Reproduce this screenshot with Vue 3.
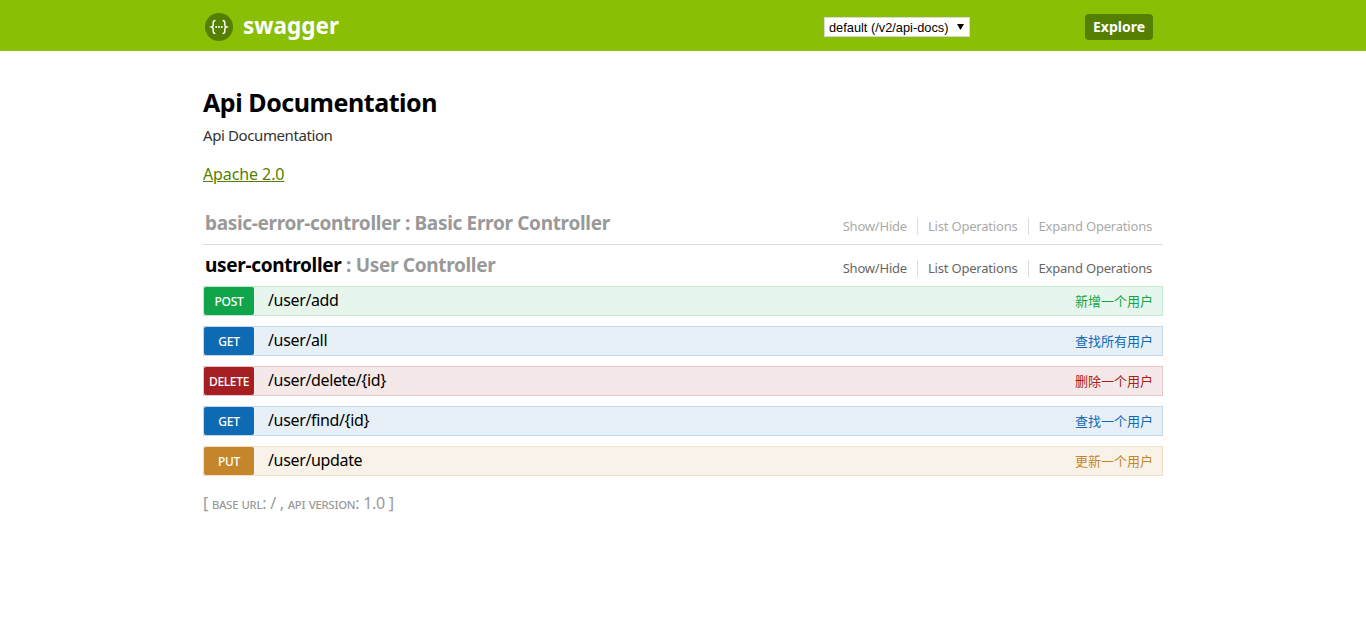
<script setup>
const ops = [
  { method: 'POST', cls: 'post', path: '/user/add', summary: '新增一个用户' },
  { method: 'GET', cls: 'get', path: '/user/all', summary: '查找所有用户' },
  { method: 'DELETE', cls: 'del', path: '/user/delete/{id}', summary: '删除一个用户' },
  { method: 'GET', cls: 'get', path: '/user/find/{id}', summary: '查找一个用户' },
  { method: 'PUT', cls: 'put', path: '/user/update', summary: '更新一个用户' },
]
</script>

<template>
  <div class="page">
    <header class="top">
      <div class="top-inner">
        <a class="logo">
          <span class="logo-mark">
            <svg width="28" height="28" viewBox="0 0 28 28">
              <circle cx="14" cy="14" r="14" fill="#547f00" />
              <path d="M10.4 7.4c-1.8 0-2.2.9-2.2 2.3v2.3c0 1.1-.5 1.7-1.6 2 1.1.3 1.6.9 1.6 2v2.3c0 1.4.4 2.3 2.2 2.3M17.6 7.4c1.8 0 2.2.9 2.2 2.3v2.3c0 1.1.5 1.7 1.6 2-1.1.3-1.6.9-1.6 2v2.3c0 1.4-.4 2.3-2.2 2.3" fill="none" stroke="#fff" stroke-width="1.5" />
              <circle cx="11.2" cy="14" r="1" fill="#fff" />
              <circle cx="14" cy="14" r="1" fill="#fff" />
              <circle cx="16.8" cy="14" r="1" fill="#fff" />
            </svg>
          </span>
          <span class="logo-text">swagger</span>
        </a>
        <div class="select-wrap">
          <select class="spec">
            <option>default (/v2/api-docs)</option>
          </select>
          <svg class="select-arrow" width="7" height="6" viewBox="0 0 7 6"><path d="M0 0h7L3.5 6z" fill="#000" /></svg>
        </div>
        <button class="explore">Explore</button>
      </div>
    </header>

    <main class="content">
      <h1 class="title">Api Documentation</h1>
      <p class="desc">Api Documentation</p>
      <a class="license">Apache 2.0</a>

      <section class="resource first">
        <div class="res-head muted">
          <h2 class="res-title"><span class="res-name">basic-error-controller</span><span class="res-desc"> : Basic Error Controller</span></h2>
          <ul class="actions">
            <li>Show/Hide</li>
            <li>List Operations</li>
            <li>Expand Operations</li>
          </ul>
        </div>
      </section>

      <section class="resource">
        <div class="res-head">
          <h2 class="res-title"><span class="res-name">user-controller</span><span class="res-desc"> : User Controller</span></h2>
          <ul class="actions">
            <li>Show/Hide</li>
            <li>List Operations</li>
            <li>Expand Operations</li>
          </ul>
        </div>
        <div class="ops">
          <div v-for="op in ops" :key="op.path" class="op" :class="op.cls">
            <span class="method">{{ op.method }}</span>
            <span class="path">{{ op.path }}</span>
            <span class="summary">{{ op.summary }}</span>
          </div>
        </div>
      </section>

      <p class="footer">[ <span class="sc">base url</span>: / , <span class="sc">api version</span>: 1.0 ]</p>
    </main>
  </div>
</template>

<style>
html, body { margin: 0; background: #fff; }
</style>

<style scoped>
.page {
  font-family: "Noto Sans", "Open Sans", "Noto Sans CJK SC", sans-serif;
  color: #000;
}
.top { background: #89bf04; height: 51px; }
.top-inner {
  width: 960px;
  margin: 0 auto;
  height: 51px;
  display: flex;
  align-items: center;
  position: relative;
}
.logo { display: flex; align-items: center; width: 621px; flex: none; }
.logo-mark { display: block; width: 28px; height: 28px; margin-left: 2px; margin-top: 3px; }
.logo-text { color: #fff; font-weight: 700; font-size: 22.5px; margin-left: 10px; line-height: 28px; }
.select-wrap { position: relative; width: 146px; height: 20px; margin-top: 3px; flex: none; }
.spec {
  appearance: none;
  display: block;
  width: 146px;
  height: 20px;
  box-sizing: border-box;
  border: 1px solid #d8d8d8;
  border-radius: 0;
  background: #fff;
  color: #000;
  padding: 0 0 0 4px;
  font: 12.8px "Liberation Sans", Arial, sans-serif;
}
.select-arrow { position: absolute; right: 6px; top: 7px; pointer-events: none; }
.explore {
  margin-left: 115px;
  margin-top: 2px;
  width: 68px;
  height: 26px;
  flex: none;
  border: 0;
  border-radius: 4px;
  background: #547f00;
  color: #fff;
  font: 700 14px "Noto Sans", "Open Sans", sans-serif;
  padding: 0;
}
.content { width: 960px; margin: 0 auto; }
.title {
  margin: 0;
  padding-top: 36px;
  font-size: 25px;
  letter-spacing: -0.45px;
  line-height: 31px;
  font-weight: 700;
}
.desc { margin: 6px 0 0; font-size: 15px; letter-spacing: -0.4px; line-height: 23px; color: #333; }
.license {
  display: inline-block;
  margin-top: 16px;
  font-size: 16px;
  letter-spacing: -0.1px;
  line-height: 22px;
  color: #547f00;
  text-decoration: underline;
}
.resource { margin: 0; }
.resource.first { margin-top: 16px; border-bottom: 1px solid #ddd; }
.res-head {
  display: flex;
  justify-content: space-between;
  align-items: flex-start;
  height: 41px;
  box-sizing: border-box;
}
.first .res-head { height: 43px; padding-top: 1px; }
.res-title {
  margin: 0;
  padding: 7px 0 0 2px;
  font-size: 19px;
  letter-spacing: -0.32px;
  line-height: 26px;
  font-weight: 700;
}
.first .res-title { padding-top: 8px; }
.res-name { color: #000; }
.res-desc { color: #999; }
.muted .res-name { color: #999; }
.actions {
  list-style: none;
  margin: 0;
  padding: 15px 0 0;
  display: flex;
  font-size: 13px;
  letter-spacing: -0.2px;
  line-height: 17px;
  color: #666;
}
.first .actions { padding-top: 16px; }
.actions li { padding: 0 10px; border-left: 1px solid #ddd; }
.actions li:first-child { border-left: 0; }
.actions li:last-child { padding-right: 11px; }
.muted .actions { color: #aaa; }
.ops { display: flex; flex-direction: column; gap: 10px; }
.op {
  height: 30px;
  box-sizing: border-box;
  border: 1px solid;
  display: flex;
  align-items: center;
}
.method {
  width: 50px;
  height: 28px;
  border-radius: 2px;
  color: #fff;
  font-size: 12px;
  letter-spacing: -0.3px;
  font-weight: 500;
  line-height: 29px;
  text-align: center;
  flex: none;
}
.path { margin-left: 14px; margin-bottom: 2px; font-size: 16px; letter-spacing: -0.35px; line-height: 28px; color: #000; }
.summary { margin-left: auto; padding-right: 9px; font-size: 13px; line-height: 28px; }
.post { background: #e7f6ec; border-color: #c3e8d1; }
.post .method { background: #10a54a; }
.post .summary { color: #10a54a; }
.get { background: #e7f0f7; border-color: #c3d9ec; }
.get .method { background: #0f6ab4; }
.get .summary { color: #0f6ab4; }
.del { background: #f5e8e8; border-color: #e8c6c7; }
.del .method { background: #a41e22; }
.del .summary { color: #a41e22; }
.put { background: #f9f2e9; border-color: #f0e0ca; }
.put .method { background: #c5862b; }
.put .summary { color: #c5862b; }
.footer {
  margin: 16px 0 0;
  font-size: 16px;
  letter-spacing: -0.27px;
  line-height: 22px;
  color: #999;
}
.sc { font-variant: small-caps; font-size: 14px; }
</style>
